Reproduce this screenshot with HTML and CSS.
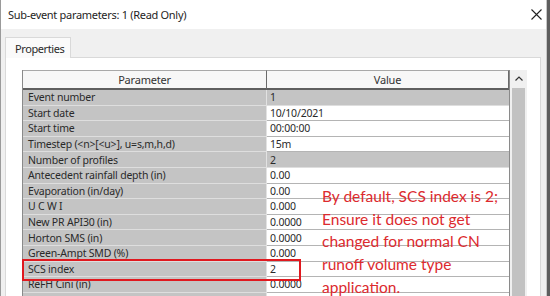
FILE: index.html
```html
<!DOCTYPE html>
<html lang="en">
<head>
  <meta charset="UTF-8" />
  <title>Sub-event parameters</title>
  <link rel="stylesheet" href="styles.css">
</head>
<body>
  <div class="window">
    <div class="titlebar">
      <span class="title">Sub-event parameters: 1 (Read Only)</span>
      <svg class="close" width="11" height="11" viewBox="0 0 11 11">
        <path d="M0.5 0.5 L10.5 10.5 M10.5 0.5 L0.5 10.5" stroke="#222" stroke-width="1.1" fill="none"/>
      </svg>
    </div>

    <div class="dialog-body">
      <div class="tabs">
        <div class="tab">Properties</div>
      </div>

      <div class="panel">
        <div class="grid-wrap">
          <div class="grid">
            <div class="head">Parameter</div>
            <div class="head">Value</div>

            <div class="param">Event number</div><div class="value readonly">1</div>
            <div class="param">Start date</div><div class="value">10/10/2021</div>
            <div class="param">Start time</div><div class="value">00:00:00</div>
            <div class="param">Timestep (&lt;n&gt;[&lt;u&gt;], u=s,m,h,d)</div><div class="value">15m</div>
            <div class="param">Number of profiles</div><div class="value readonly">2</div>
            <div class="param">Antecedent rainfall depth (in)</div><div class="value">0.00</div>
            <div class="param">Evaporation (in/day)</div><div class="value">0.00</div>
            <div class="param">U C W I</div><div class="value">0.000</div>
            <div class="param">New PR API30 (in)</div><div class="value">0.0000</div>
            <div class="param">Horton SMS (in)</div><div class="value">0.0000</div>
            <div class="param">Green-Ampt SMD (%)</div><div class="value">0.000</div>
            <div class="param">SCS index</div><div class="value">2</div>
            <div class="param">ReFH Cini (in)</div><div class="value">0.0000</div>
            <div class="param">&nbsp;</div><div class="value">&nbsp;</div>
          </div>

          <!-- highlight + note drawn over the grid -->
          <div class="highlight"></div>
          <div class="note">
            By default, SCS index is 2;<br>
            Ensure it does not get<br>
            changed for normal CN<br>
            runoff volume type<br>
            application.
          </div>
        </div>

        <div class="scrollbar">
          <div class="arrow">
            <svg width="8" height="5" viewBox="0 0 8 5">
              <path d="M0.5 4.5 L4 1 L7.5 4.5" stroke="#333" stroke-width="1.2" fill="none"/>
            </svg>
          </div>
          <div class="thumb"></div>
        </div>
      </div>
    </div>
  </div>
</body>
</html>
```

FILE: styles.css
```css
body {
  margin: 0;
  background: #5e5e5e;
  font-family: "Noto Sans", "Open Sans", sans-serif;
  font-size: 10.5px;
  letter-spacing: -0.2px;
  color: #2a2a2a;
  overflow: hidden;
}
.window {
  width: 545px;
  height: 296px;
  background: #f0f0f0;
  border-left: 1px solid #9a9a9a;
  border-right: 1px solid #c8c8c8;
  overflow: hidden;
}
.titlebar {
  height: 29px;
  background: #ffffff;
  display: flex;
  align-items: center;
  justify-content: space-between;
  padding: 0 4px 0 7px;
}
.title {
  font-size: 11px;
  letter-spacing: -0.3px;
  color: #1e1e1e;
}
.dialog-body {
  padding: 8px 0 0 4px;
}
.tabs {
  display: flex;
  height: 20px;
}
.tab {
  padding: 0 6px 0 9px;
  border: 1px solid #d9d9d9;
  border-bottom: none;
  background: #fafafa;
  display: flex;
  align-items: center;
  font-size: 11px;
  letter-spacing: -0.4px;
  margin-bottom: -1px;
  position: relative;
}
.panel {
  width: 518px;
  height: 260px;
  background: #ffffff;
  border: 1px solid #d9d9d9;
  padding: 12px 0 0 16px;
  display: flex;
}
.grid-wrap {
  position: relative;
}
.grid {
  display: grid;
  grid-template-columns: 244px 242px;
  grid-template-rows: 20px;
  grid-auto-rows: 15.6px;
  border-left: 1px solid #8a8a8a;
  border-right: 1px solid #8a8a8a;
}
.head {
  background: #f7f7f7;
  border-top: 1px solid #a8a8a8;
  border-bottom: 2px solid #5f5f5f;
  border-right: 1px solid #6a6a6a;
  display: flex;
  align-items: center;
  justify-content: center;
  font-size: 11px;
  color: #333;
}
.param,
.value {
  display: flex;
  align-items: center;
  white-space: nowrap;
  overflow: hidden;
}
.param {
  background: #c4c4c4;
  padding-left: 5px;
  border-bottom: 1px solid #dedede;
  border-right: 1px solid #e2e2e2;
}
.value {
  background: #ffffff;
  padding-left: 3px;
  border-bottom: 1px solid #b4b4b4;
}
.value.readonly {
  background: #c4c4c4;
  border-bottom-color: #dedede;
}
.highlight {
  position: absolute;
  left: 0;
  top: 189px;
  width: 275px;
  height: 18px;
  border: 2px solid #e0191f;
}
.note {
  position: absolute;
  left: 300px;
  top: 115px;
  font-family: "Lato", "Noto Sans", sans-serif;
  font-size: 15.5px;
  letter-spacing: 0;
  line-height: 22.7px;
  color: #dc2a2e;
  white-space: nowrap;
}
.scrollbar {
  width: 17px;
  display: flex;
  flex-direction: column;
  background: #f0f0f0;
}
.arrow {
  height: 17px;
  display: flex;
  align-items: center;
  justify-content: center;
}
.thumb {
  flex: 1;
  margin: 1px 2px 0 2px;
  background: #c2c2c2;
}
```
